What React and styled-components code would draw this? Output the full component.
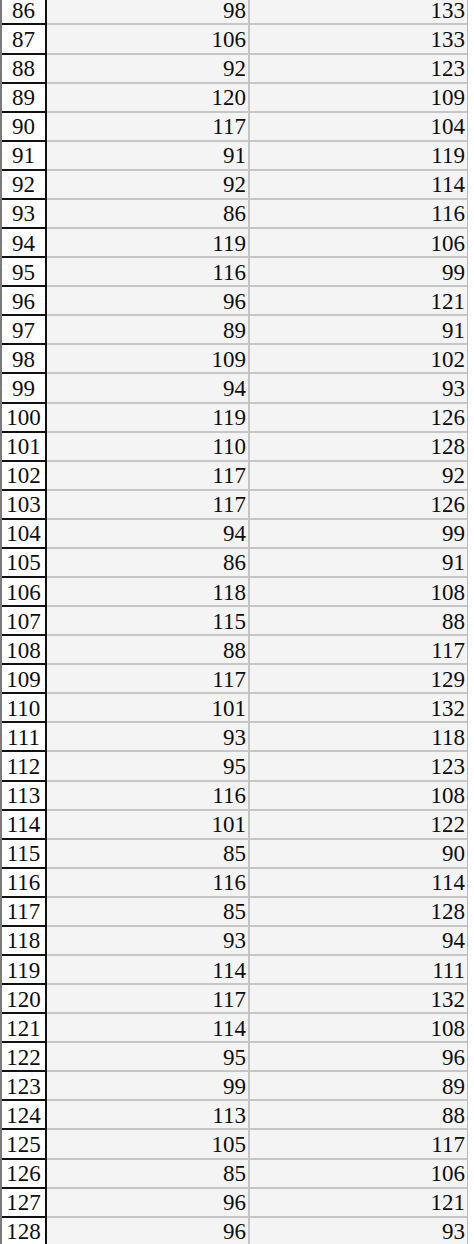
import React from "react";
import styled, { createGlobalStyle } from "styled-components";

const rows = [
  [86, 98, 133],
  [87, 106, 133],
  [88, 92, 123],
  [89, 120, 109],
  [90, 117, 104],
  [91, 91, 119],
  [92, 92, 114],
  [93, 86, 116],
  [94, 119, 106],
  [95, 116, 99],
  [96, 96, 121],
  [97, 89, 91],
  [98, 109, 102],
  [99, 94, 93],
  [100, 119, 126],
  [101, 110, 128],
  [102, 117, 92],
  [103, 117, 126],
  [104, 94, 99],
  [105, 86, 91],
  [106, 118, 108],
  [107, 115, 88],
  [108, 88, 117],
  [109, 117, 129],
  [110, 101, 132],
  [111, 93, 118],
  [112, 95, 123],
  [113, 116, 108],
  [114, 101, 122],
  [115, 85, 90],
  [116, 116, 114],
  [117, 85, 128],
  [118, 93, 94],
  [119, 114, 111],
  [120, 117, 132],
  [121, 114, 108],
  [122, 95, 96],
  [123, 99, 89],
  [124, 113, 88],
  [125, 105, 117],
  [126, 85, 106],
  [127, 96, 121],
  [128, 96, 93],
];

const GlobalStyle = createGlobalStyle`
  html, body {
    margin: 0;
    padding: 0;
    background: #ffffff;
    font-family: "Liberation Serif", "Times New Roman", Times, serif;
  }
`;

const Viewport = styled.div`
  width: 474px;
  height: 1244px;
  overflow: hidden;
  background: #ffffff;
  color: #0d0d0d;
`;

const Sheet = styled.div`
  display: flex;
  flex-direction: column;
  margin-top: -3.6px;
  width: 468px;
`;

const Row = styled.div`
  display: grid;
  grid-template-columns: 45px 203px 218px;
  height: 29.09px;
  border-left: 2px solid #7a7a7a;
`;

const Cell = styled.div`
  display: flex;
  align-items: center;
  font-family: "Liberation Serif", "Times New Roman", Times, serif;
  font-size: 23px;
  line-height: 19px;
  padding-top: 1px;
`;

const IndexCell = styled(Cell)`
  justify-content: center;
  background: #ffffff;
  border-right: 2px solid #111;
  border-bottom: 2px solid #111;
`;

const DataCell = styled(Cell)`
  justify-content: flex-end;
  padding-right: 2px;
  background: #f4f4f4;
  border-right: ${(p) => (p.$last ? "1px solid #b8b8b8" : "2px solid #c4c4c4")};
  border-bottom: 2px solid #c6c6c6;
`;

const App = () => (
  <Viewport>
    <GlobalStyle />
    <Sheet>
      {rows.map(([idx, a, b]) => (
        <Row key={idx}>
          <IndexCell>{idx}</IndexCell>
          <DataCell>{a}</DataCell>
          <DataCell $last>{b}</DataCell>
        </Row>
      ))}
    </Sheet>
  </Viewport>
);

export default App;
